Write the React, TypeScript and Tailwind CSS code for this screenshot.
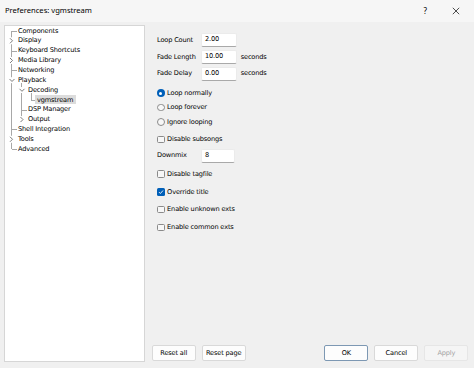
import React from 'react';

const ROW = 9.85;

type TreeItem = { label: string; level: number; selected?: boolean };

const TREE: TreeItem[] = [
  { label: 'Components', level: 0 },
  { label: 'Display', level: 0 },
  { label: 'Keyboard Shortcuts', level: 0 },
  { label: 'Media Library', level: 0 },
  { label: 'Networking', level: 0 },
  { label: 'Playback', level: 0 },
  { label: 'Decoding', level: 1 },
  { label: 'vgmstream', level: 2, selected: true },
  { label: 'DSP Manager', level: 1 },
  { label: 'Output', level: 1 },
  { label: 'Shell Integration', level: 0 },
  { label: 'Tools', level: 0 },
  { label: 'Advanced', level: 0 },
];

const cy = (i: number) => 4.92 + ROW * i;

function TreeLines() {
  const line = '#a8a8a8';
  const chev = '#5a5a5a';
  const closed = (x: number, i: number) => (
    <g key={`c${i}`}>
      <rect x={x - 3} y={cy(i) - 3.5} width={7} height={7} fill="white" />
      <path d={`M${x - 1} ${cy(i) - 2.5} L${x + 1.5} ${cy(i)} L${x - 1} ${cy(i) + 2.5}`} stroke={chev} strokeWidth={0.8} fill="none" />
    </g>
  );
  const open = (x: number, i: number) => (
    <g key={`o${i}`}>
      <rect x={x - 3.5} y={cy(i) - 3} width={7} height={6} fill="white" />
      <path d={`M${x - 2.5} ${cy(i) - 1.2} L${x} ${cy(i) + 1.3} L${x + 2.5} ${cy(i) - 1.2}`} stroke={chev} strokeWidth={0.8} fill="none" />
    </g>
  );
  return (
    <svg className="absolute left-0 top-0" width={140} height={140} shapeRendering="crispEdges">
      <g stroke={line} strokeWidth={1}>
        <line x1={6.5} y1={cy(0)} x2={6.5} y2={cy(12)} />
        {[0, 2, 4, 10, 12].map((i) => (
          <line key={i} x1={6.5} y1={Math.round(cy(i)) + 0.5} x2={12} y2={Math.round(cy(i)) + 0.5} />
        ))}
        <line x1={16.5} y1={cy(5) + 3} x2={16.5} y2={cy(9) - 2} />
        <line x1={16.5} y1={Math.round(cy(8)) + 0.5} x2={22} y2={Math.round(cy(8)) + 0.5} />
        <line x1={26.5} y1={cy(6) + 3} x2={26.5} y2={Math.round(cy(7)) + 0.5} />
        <line x1={26.5} y1={Math.round(cy(7)) + 0.5} x2={30} y2={Math.round(cy(7)) + 0.5} />
      </g>
      <g shapeRendering="geometricPrecision">
        {closed(6, 1)}
        {closed(6, 3)}
        {closed(6, 11)}
        {open(7, 5)}
        {open(17, 6)}
        {closed(16.5, 9)}
      </g>
    </svg>
  );
}

function Tree() {
  return (
    <div className="relative w-[141px] h-[337px] bg-white border border-[#d6d6d6]">
      <TreeLines />
      <div className="relative flex flex-col">
        {TREE.map((t) => (
          <div
            key={t.label}
            className={
              'flex items-center h-[9.85px] ' +
              (t.level === 0 ? 'pl-[13px]' : t.level === 1 ? 'pl-[23px]' : 'pl-[30px]')
            }
          >
            <span className={t.selected ? 'bg-[#dcdcdc] px-[2px] h-[9px] flex items-center pr-[3px]' : ''}>{t.label}</span>
          </div>
        ))}
      </div>
    </div>
  );
}

function TextBox({ value, w = 'w-[36px]' }: { value: string; w?: string }) {
  return (
    <div
      className={`${w} h-[14px] bg-white border border-[#ebebeb] border-b-[#a9a9a9] rounded-[2px] flex items-center pl-[3px] pb-[1px]`}
    >
      {value}
    </div>
  );
}

function Radio({ checked, label, cls }: { checked?: boolean; label: string; cls: string }) {
  return (
    <div className={`flex items-center h-[10px] ${cls}`}>
      {checked ? (
        <span className="w-[7.6px] h-[7.6px] rounded-full bg-[#005fb8] flex items-center justify-center">
          <span className="w-[3px] h-[3px] rounded-full bg-white" />
        </span>
      ) : (
        <span className="w-[7.6px] h-[7.6px] rounded-full border border-[#8a8a8a] bg-[#f7f7f7]" />
      )}
      <span className="ml-[2.5px]">{label}</span>
    </div>
  );
}

function Check({ checked, label, cls }: { checked?: boolean; label: string; cls: string }) {
  return (
    <div className={`flex items-center h-[10px] ${cls}`}>
      {checked ? (
        <span className="w-[7.6px] h-[7.6px] rounded-[1.5px] bg-[#005fb8] flex items-center justify-center">
          <svg width="6" height="6" viewBox="0 0 6 6">
            <path d="M1 3.1 L2.4 4.5 L5 1.5" stroke="white" strokeWidth="0.9" fill="none" />
          </svg>
        </span>
      ) : (
        <span className="w-[7.6px] h-[7.6px] rounded-[1.5px] border border-[#8a8a8a] bg-[#f7f7f7]" />
      )}
      <span className="ml-[2.5px]">{label}</span>
    </div>
  );
}

function Btn({ label, kind }: { label: string; kind?: 'default' | 'disabled' }) {
  const base = 'w-[44px] h-[16px] rounded-[2px] flex items-center justify-center';
  if (kind === 'default')
    return <div className={`${base} bg-[#fdfdfd] border border-[#7d98b3]`}>{label}</div>;
  if (kind === 'disabled')
    return <div className={`${base} bg-[#f5f5f5] border border-[#e6e6e6] text-[#a3a3a3]`}>{label}</div>;
  return <div className={`${base} bg-[#fdfdfd] border border-[#d9d9d9]`}>{label}</div>;
}

export default function App() {
  return (
    <div className="w-[474px] h-[368px] bg-[#f0f0f0] flex flex-col font-['DejaVu_Sans',sans-serif] text-[6.6px] tracking-[-0.15px] leading-none text-black overflow-hidden">
      <div className="h-[22px] bg-[#f6f6f6] flex items-center pl-[5px] pr-[14px] font-['Noto_Sans',sans-serif] text-[7.6px] tracking-normal">
        <span>Preferences: vgmstream</span>
        <span className="ml-auto mr-[25px] text-[8px]">?</span>
        <svg width="8" height="8" viewBox="0 0 8 8">
          <path d="M0.8 0.8 L7.2 7.2 M7.2 0.8 L0.8 7.2" stroke="#222" strokeWidth="0.8" />
        </svg>
      </div>
      <div className="flex flex-1">
        <div className="pl-[4px] pt-[3px]">
          <Tree />
        </div>
        <div className="flex-1 flex flex-col">
          <div className="pl-[12px] flex flex-col">
            <div className="flex items-center mt-[11px]">
              <span className="w-[44px]">Loop Count</span>
              <TextBox value="2.00" />
            </div>
            <div className="flex items-center mt-[3px]">
              <span className="w-[44px]">Fade Length</span>
              <TextBox value="10.00" />
              <span className="ml-[3.7px]">seconds</span>
            </div>
            <div className="flex items-center mt-[2.5px]">
              <span className="w-[44px]">Fade Delay</span>
              <TextBox value="0.00" />
              <span className="ml-[3.7px]">seconds</span>
            </div>
            <Radio checked label="Loop normally" cls="mt-[7.5px]" />
            <Radio label="Loop forever" cls="mt-[4.5px]" />
            <Radio label="Ignore looping" cls="mt-[4.5px]" />
            <Check label="Disable subsongs" cls="mt-[7.5px]" />
            <div className="flex items-center mt-[4px]">
              <span className="w-[44px]">Downmix</span>
              <TextBox value="8" w="w-[34.3px]" />
            </div>
            <Check label="Disable tagfile" cls="mt-[6.5px]" />
            <Check checked label="Override title" cls="mt-[8px]" />
            <Check label="Enable unknown exts" cls="mt-[7.7px]" />
            <Check label="Enable common exts" cls="mt-[7.7px]" />
          </div>
          <div className="mt-auto mb-[7px] flex pl-[6.7px] pr-[5.7px] gap-[6px]">
            <Btn label="Reset all" />
            <Btn label="Reset page" />
            <div className="flex-1" />
            <Btn label="OK" kind="default" />
            <Btn label="Cancel" />
            <Btn label="Apply" kind="disabled" />
          </div>
        </div>
      </div>
    </div>
  );
}
